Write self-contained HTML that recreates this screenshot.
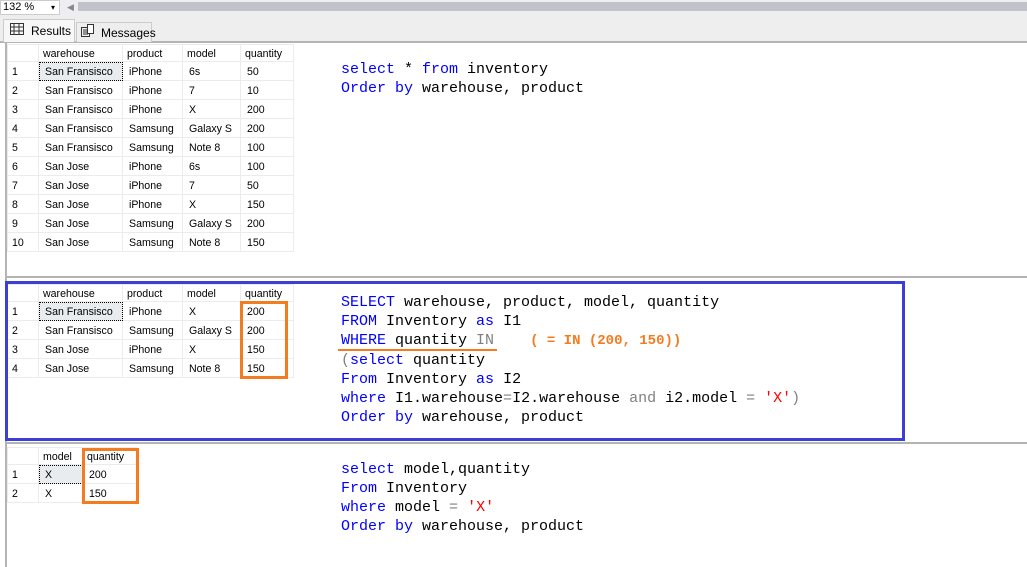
<!DOCTYPE html>
<html><head><meta charset="utf-8"><style>
*{margin:0;padding:0;box-sizing:border-box}
body{width:1027px;height:567px;overflow:hidden;background:#fff;position:relative;font-family:"Liberation Sans",Arial,sans-serif;font-size:11px;color:#000}
.a{position:absolute}
table{border-collapse:collapse;position:absolute;table-layout:fixed}
td{height:19px;border:1px solid #ececec;padding:1px 0 0 6px;white-space:nowrap;overflow:hidden;font-size:10.6px}
tr.h td{height:17px;background:#fff;padding-left:4px;border-color:#ececec}
td.n{padding-left:4px}
td.sel{background:#e8ecef;outline:1px dotted #000;outline-offset:-1px}
.code{position:absolute;font-family:"Liberation Mono","DejaVu Sans Mono",monospace;font-size:15px;line-height:19px;white-space:pre;color:#000}
.k{color:#0000ff}.g{color:#808080}.r{color:#ff0000}
</style></head><body>
<div class="a" style="left:0;top:0;width:1027px;height:15px;background:#eeeef2"></div>
<div class="a" style="left:0;top:0;width:60px;height:15px;background:#fff;border:1px solid #ccc;font-size:11px;padding-left:2px;line-height:13px">132 %</div>
<div class="a" style="left:51px;top:3px;font-size:8px">▾</div>
<div class="a" style="left:67px;top:2px;font-size:9px;color:#888">◀</div>
<div class="a" style="left:78px;top:2px;width:949px;height:9px;background:#c2c3c9"></div>
<div class="a" style="left:0;top:15px;width:1027px;height:27px;background:#eeeeee"></div>
<div class="a" style="left:0;top:41px;width:1027px;height:2px;background:#b4b4b4"></div>
<div class="a" style="left:3px;top:19px;width:72px;height:23px;background:#f7f7f7;border:1px solid #ccc;border-bottom:none;font-size:12px;padding:4px 0 0 27px">Results</div>
<svg class="a" style="left:10px;top:23px" width="14" height="12"><rect x="0.5" y="0.5" width="13" height="11" fill="none" stroke="#333"/><path d="M0 4H14M0 8H14M4 0V12M9 0V12" stroke="#333"/></svg>
<div class="a" style="left:76px;top:22px;width:76px;height:20px;background:#eeeeee;border:1px solid #ccc;border-bottom:none;font-size:12px;padding:3px 0 0 24px">Messages</div>
<svg class="a" style="left:81px;top:24px" width="14" height="13"><rect x="0.5" y="3.5" width="8" height="9" fill="none" stroke="#333"/><rect x="6.5" y="0.5" width="6" height="9" fill="#fff" stroke="#333"/><path d="M2 6H7M2 8H7M2 10H7" stroke="#333"/></svg>
<div class="a" style="left:5px;top:43px;width:2px;height:524px;background:#b4b4b4"></div>
<div class="a" style="left:5px;top:276px;width:1022px;height:2px;background:#b4b4b4"></div>
<div class="a" style="left:5px;top:442px;width:1022px;height:2px;background:#b4b4b4"></div>

<table style="left:7px;top:44px">
<colgroup><col style="width:31px"><col style="width:84px"><col style="width:60px"><col style="width:58px"><col style="width:53px"></colgroup>
<tr class="h"><td></td><td>warehouse</td><td>product</td><td>model</td><td>quantity</td></tr>
<tr><td class="n">1</td><td class="sel">San Fransisco</td><td>iPhone</td><td>6s</td><td>50</td></tr>
<tr><td class="n">2</td><td>San Fransisco</td><td>iPhone</td><td>7</td><td>10</td></tr>
<tr><td class="n">3</td><td>San Fransisco</td><td>iPhone</td><td>X</td><td>200</td></tr>
<tr><td class="n">4</td><td>San Fransisco</td><td>Samsung</td><td>Galaxy S</td><td>200</td></tr>
<tr><td class="n">5</td><td>San Fransisco</td><td>Samsung</td><td>Note 8</td><td>100</td></tr>
<tr><td class="n">6</td><td>San Jose</td><td>iPhone</td><td>6s</td><td>100</td></tr>
<tr><td class="n">7</td><td>San Jose</td><td>iPhone</td><td>7</td><td>50</td></tr>
<tr><td class="n">8</td><td>San Jose</td><td>iPhone</td><td>X</td><td>150</td></tr>
<tr><td class="n">9</td><td>San Jose</td><td>Samsung</td><td>Galaxy S</td><td>200</td></tr>
<tr><td class="n">10</td><td>San Jose</td><td>Samsung</td><td>Note 8</td><td>150</td></tr>
</table>
<div class="code" style="left:341px;top:60px"><span class="k">select</span> * <span class="k">from</span> inventory
<span class="k">Order by</span> warehouse, product</div>

<table style="left:7px;top:284px">
<colgroup><col style="width:31px"><col style="width:84px"><col style="width:60px"><col style="width:58px"><col style="width:53px"></colgroup>
<tr class="h"><td></td><td>warehouse</td><td>product</td><td>model</td><td>quantity</td></tr>
<tr><td class="n">1</td><td class="sel">San Fransisco</td><td>iPhone</td><td>X</td><td>200</td></tr>
<tr><td class="n">2</td><td>San Fransisco</td><td>Samsung</td><td>Galaxy S</td><td>200</td></tr>
<tr><td class="n">3</td><td>San Jose</td><td>iPhone</td><td>X</td><td>150</td></tr>
<tr><td class="n">4</td><td>San Jose</td><td>Samsung</td><td>Note 8</td><td>150</td></tr>
</table>
<div class="a" style="left:240px;top:301px;width:48px;height:78px;border:3px solid #f47b20"></div>
<div class="a" style="left:5px;top:281px;width:900px;height:160px;border:3px solid #3c3fd4"></div>
<div class="code" style="left:341px;top:293px"><span class="k">SELECT</span> warehouse, product, model, quantity
<span class="k">FROM</span> Inventory <span class="k">as</span> I1
<span class="k">WHERE</span> quantity <span class="g">IN</span>    <b style="color:#f47b20;font-size:14px">( = IN (200, 150))</b>
<span class="g">(</span><span class="k">select</span> quantity
<span class="k">From</span> Inventory <span class="k">as</span> I2
<span class="k">where</span> I1.warehouse<span class="g">=</span>I2.warehouse <span class="g">and</span> i2.model <span class="g">=</span> <span class="r">'X'</span><span class="g">)</span>
<span class="k">Order by</span> warehouse, product</div>
<div class="a" style="left:338px;top:349px;width:159px;height:2px;background:#f47b20"></div>

<table style="left:7px;top:447px">
<colgroup><col style="width:31px"><col style="width:44px"><col style="width:54px"></colgroup>
<tr class="h"><td></td><td>model</td><td>quantity</td></tr>
<tr><td class="n">1</td><td class="sel">X</td><td>200</td></tr>
<tr><td class="n">2</td><td>X</td><td>150</td></tr>
</table>
<div class="a" style="left:82px;top:448px;width:57px;height:56px;border:3px solid #f47b20"></div>
<div class="code" style="left:341px;top:460px"><span class="k">select</span> model,quantity
<span class="k">From</span> Inventory
<span class="k">where</span> model <span class="g">=</span> <span class="r">'X'</span>
<span class="k">Order by</span> warehouse, product</div>
</body></html>
